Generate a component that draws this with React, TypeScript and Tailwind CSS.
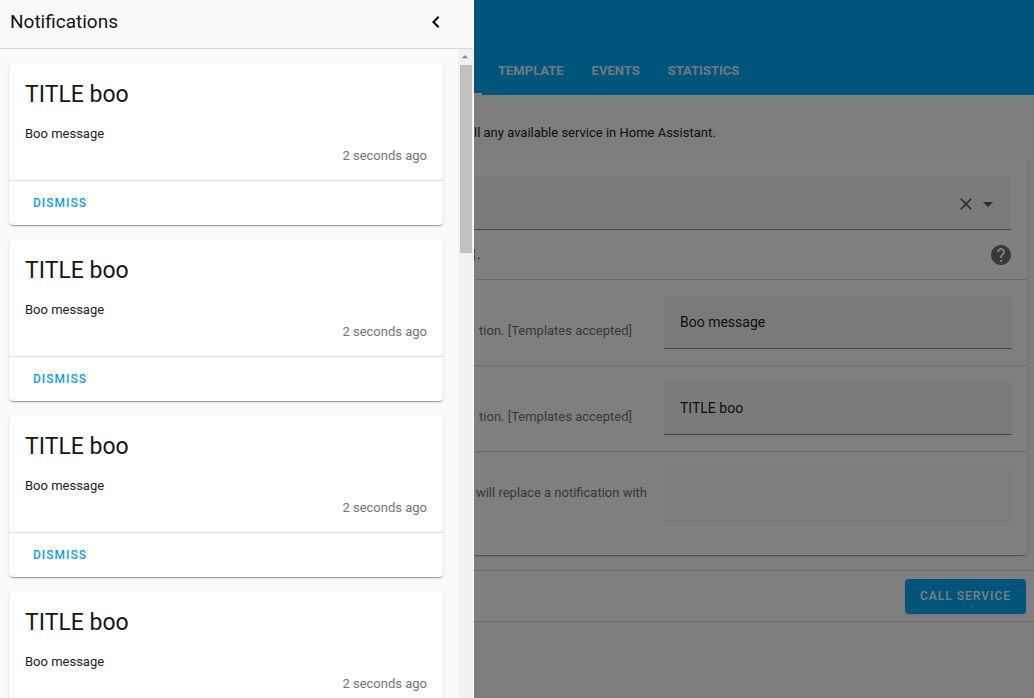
import { useState } from 'react';
import { MdArrowDropDown, MdArrowDropUp, MdChevronLeft, MdClose, MdHelp, MdOpenInNew } from 'react-icons/md';

type Notification = { id: number; title: string; message: string; when: string };

const INITIAL: Notification[] = [1, 2, 3, 4].map(id => ({
  id,
  title: 'TITLE boo',
  message: 'Boo message',
  when: '2 seconds ago',
}));

const TABS = ['Template', 'Events', 'Statistics'];

function NotificationCard({ item, onDismiss }: { item: Notification; onDismiss: () => void }) {
  return (
    <article className="shrink-0 rounded bg-white shadow-[0_2px_1px_-1px_rgba(0,0,0,0.2),0_1px_1px_rgba(0,0,0,0.14),0_1px_3px_rgba(0,0,0,0.12)]">
      <div className="px-4 pt-[15px] pb-3.5">
        <h2 className="text-[23px] leading-8 text-[#141414]">{item.title}</h2>
        <p className="mt-[13px] text-[13px] leading-5 text-[#212121]">{item.message}</p>
        <p className="mt-0.5 text-right text-[13px] leading-5 text-[#727272]">{item.when}</p>
      </div>
      <div className="flex h-[45px] items-center border-t border-[#e0e0e0] px-2">
        <button
          onClick={onDismiss}
          className="h-8 rounded px-4 text-xs font-medium uppercase tracking-[1px] text-[#0f9cf4]"
        >
          Dismiss
        </button>
      </div>
    </article>
  );
}

function Drawer() {
  const [items, setItems] = useState(INITIAL);

  return (
    <aside className="flex w-[474px] shrink-0 flex-col border-r border-white bg-[#fafafa]">
      <header className="flex h-[49px] shrink-0 items-center justify-between border-b border-[#d8d8d8] pr-[25px] pb-1 pl-2.5">
        <h1 className="text-[19px] leading-6 text-[#141414]">Notifications</h1>
        <button aria-label="Close notifications">
          <MdChevronLeft className="size-6 text-black" />
        </button>
      </header>
      <div className="flex min-h-0 flex-1">
        <div className="flex min-w-0 flex-1 flex-col gap-[15px] overflow-hidden pt-[15px] pr-[15px] pl-[9px]">
          {items.map(item => (
            <NotificationCard
              key={item.id}
              item={item}
              onDismiss={() => setItems(items.filter(i => i.id !== item.id))}
            />
          ))}
        </div>
        {/* scrollbar */}
        <div className="flex w-[15px] shrink-0 flex-col items-end bg-[#f1f1f1] pr-px">
          <MdArrowDropUp className="size-4 shrink-0 self-center text-[#8b8b8b]" />
          <div className="h-[188px] w-3 bg-[#c1c1c1]" />
        </div>
      </div>
    </aside>
  );
}

type FieldProps = { id: string; hint: string; initial: string; disabled?: boolean };

function FieldRow({ id, hint, initial, disabled }: FieldProps) {
  const [value, setValue] = useState(initial);
  return (
    <div className="flex justify-between border-t border-[#d8d8d8] py-4 pr-[15px]">
      <label
        htmlFor={id}
        className={
          disabled
            ? 'flex h-[71px] min-w-0 flex-1 items-start justify-end overflow-hidden pt-[15px] pr-[17px] text-[13px] leading-5 whitespace-nowrap text-[#727272]'
            : 'flex min-w-0 flex-1 items-center justify-end overflow-hidden pt-4 pr-8 text-[13px] leading-5 whitespace-nowrap text-[#727272]'
        }
      >
        {hint}
      </label>
      <input
        id={id}
        value={value}
        disabled={disabled}
        onChange={e => setValue(e.target.value)}
        className="h-[53px] w-[348px] rounded-t border-b border-[#8c8c8c] bg-[#f5f5f5] px-4 text-sm text-[#212121] outline-none disabled:border-[#ececec] disabled:bg-[#fbfbfb]"
      />
    </div>
  );
}

function ServicePage() {
  const [service, setService] = useState('');

  return (
    <main className="relative flex min-w-0 flex-1 flex-col overflow-hidden bg-[#fafafa]">
      <header className="flex h-[95px] shrink-0 items-end bg-[#03a9f4]">
        <span className="h-0.5 w-2 bg-white" />
        <nav className="flex h-12 items-center gap-7 pl-4">
          {TABS.map(tab => (
            <button key={tab} className="text-[13px] font-bold uppercase text-white/85">
              {tab}
            </button>
          ))}
        </nav>
      </header>

      <p className="mt-7 text-[13px] leading-5 whitespace-nowrap text-[#212121]">
        ll any available service in Home Assistant.
      </p>

      <section className="mt-3.5 mr-[7px] rounded-br rounded-tr bg-white shadow-[0_2px_1px_-1px_rgba(0,0,0,0.2),0_1px_1px_rgba(0,0,0,0.14),0_1px_3px_rgba(0,0,0,0.12)]">
        <div className="pt-[19px] pr-4">
          <div className="flex h-[54px] items-center rounded-tr border-b border-[#8c8c8c] bg-[#f5f5f5] pt-0.5 pr-[11px]">
            <input
              aria-label="Service"
              value={service}
              onChange={e => setService(e.target.value)}
              className="min-w-0 flex-1 bg-transparent px-4 text-sm outline-none"
            />
            <button aria-label="Clear" className="text-[#5f5f5f]" onClick={() => setService('')}>
              <MdClose className="size-5" />
            </button>
            <button aria-label="Show services" className="text-[#5f5f5f]">
              <MdArrowDropDown className="size-6" />
            </button>
          </div>
        </div>
        <div className="flex h-[49px] items-center justify-between pr-3.5">
          <p className="flex items-center text-[13px] leading-5 text-[#212121]">
            <a href="#docs" aria-label="Documentation" className="flex w-[3px] justify-end overflow-hidden text-[#03a9f4]">
              <MdOpenInNew className="size-4 shrink-0" />
            </a>
            .
          </p>
          <button aria-label="Help">
            <MdHelp className="size-6 text-[#727272]" />
          </button>
        </div>
        <FieldRow id="message" hint="tion. [Templates accepted]" initial="Boo message" />
        <FieldRow id="title" hint="tion. [Templates accepted]" initial="TITLE boo" />
        <FieldRow id="notification-id" hint="will replace a notification with" initial="" disabled />
      </section>

      <footer className="mt-[15px] flex h-[52px] shrink-0 items-center justify-end border-y border-[#d8d8d8] bg-white pr-2">
        <button className="h-[35px] rounded bg-[#03a9f4] px-[15px] text-xs font-medium uppercase tracking-[1px] text-white shadow">
          Call service
        </button>
      </footer>

      {/* scrim behind the open drawer */}
      <div className="pointer-events-none absolute inset-0 bg-black/50" />
    </main>
  );
}

export default function App() {
  return (
    <div className="flex h-screen overflow-hidden font-[Roboto,sans-serif]">
      <Drawer />
      <ServicePage />
    </div>
  );
}
